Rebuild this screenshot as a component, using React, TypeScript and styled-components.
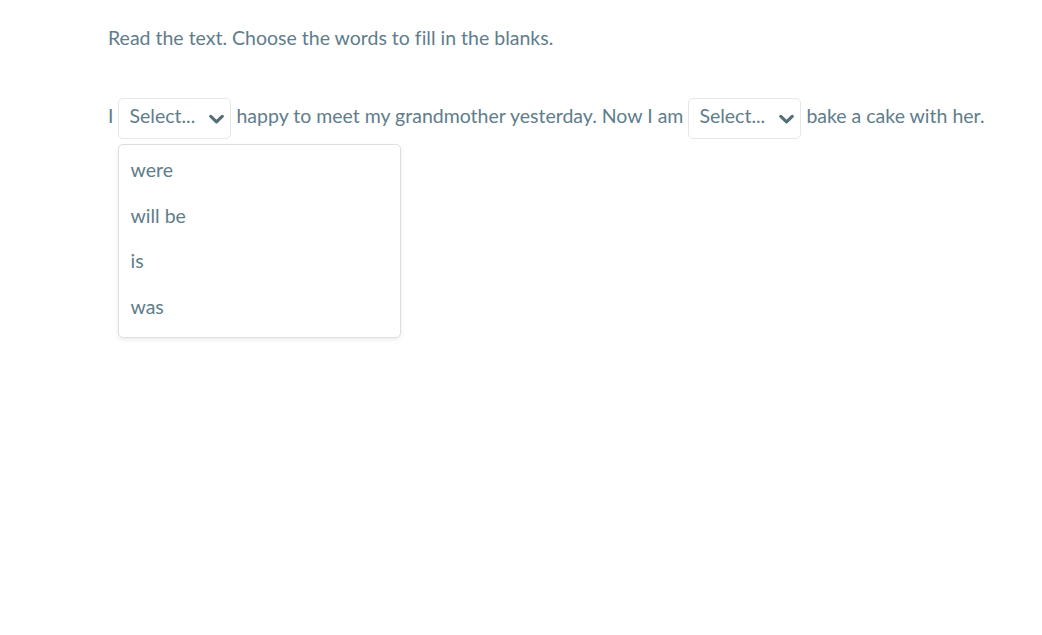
import styled, { createGlobalStyle } from 'styled-components';

const GlobalStyle = createGlobalStyle`
	html, body {
		margin: 0;
		padding: 0;
		background: #fff;
	}
	body {
		font-family: 'Lato', 'Open Sans', sans-serif;
		font-variant-ligatures: none;
		color: #607d8b;
	}
`;

const options = ['were', 'will be', 'is', 'was'];

const Chevron = () => (
	<svg width="15" height="11" viewBox="0 0 15 11" aria-hidden="true">
		<path
			d="M1.8 2.4 L7.5 7.8 L13.2 2.4"
			fill="none"
			stroke="#546e7a"
			strokeWidth="3.2"
			strokeLinecap="round"
			strokeLinejoin="round"
		/>
	</svg>
);

const Dropdown = ({ expanded = false }: { expanded?: boolean }) => (
	<SelectWrap>
		<SelectBox>
			<Placeholder>Select...</Placeholder>
			<Chevron />
		</SelectBox>
		{expanded ? (
			<Menu>
				{options.map((o) => (
					<MenuItem key={o}>{o}</MenuItem>
				))}
			</Menu>
		) : null}
	</SelectWrap>
);

const App = () => {
	return (
		<Page>
			<GlobalStyle />
			<Instruction>Read the text. Choose the words to fill in the blanks.</Instruction>
			<Sentence>
				<Words>I</Words>
				<Dropdown expanded />
				<Words>happy to meet my grandmother yesterday. Now I am</Words>
				<Dropdown />
				<Words>bake a cake with her.</Words>
			</Sentence>
		</Page>
	);
};

const Page = styled.div`
	box-sizing: border-box;
	min-height: 635px;
	padding: 25px 0 0 108px;
	font-size: 19.5px;
`;

const Instruction = styled.p`
	margin: 0;
	line-height: 26px;
`;

const Sentence = styled.div`
	display: flex;
	align-items: center;
	gap: 5px;
	margin-top: 47px;
	line-height: 26px;
	white-space: nowrap;
`;

const Words = styled.span`
	padding-bottom: 5px;
`;

const SelectWrap = styled.div`
	position: relative;
	z-index: 5;
`;

const SelectBox = styled.div`
	display: flex;
	align-items: center;
	justify-content: space-between;
	box-sizing: border-box;
	height: 41px;
	width: 113px;
	padding: 0 6px 0 10px;
	border: 1px solid #e4e8ea;
	border-radius: 5px;
	background: #fff;

	svg {
		margin-top: 2px;
	}
`;

const Placeholder = styled.span`
	margin-top: -6px;
`;

const Menu = styled.div`
	position: absolute;
	top: 46px;
	left: 0;
	width: 283px;
	box-sizing: border-box;
	padding: 6px 0 4px;
	background: #fff;
	border: 1px solid #dcdfe1;
	border-radius: 5px;
	box-shadow: 0 2px 5px rgba(0, 0, 0, 0.08);
`;

const MenuItem = styled.div`
	padding: 0 11px;
	height: 45.5px;
	line-height: 38px;
`;

export default App;
